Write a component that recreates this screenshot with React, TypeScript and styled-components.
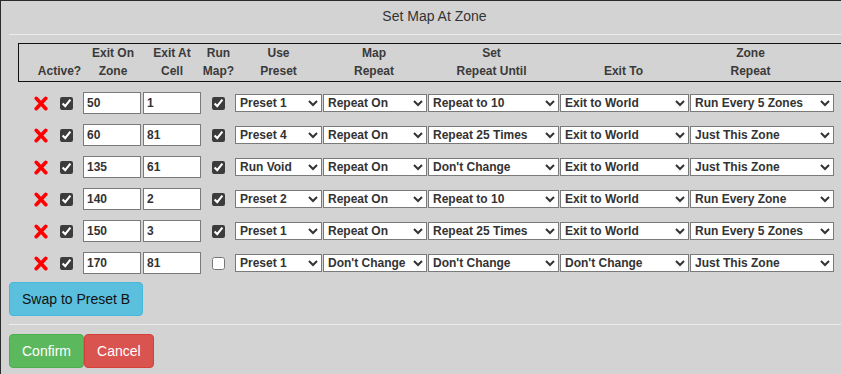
import React from "react";
import styled, { createGlobalStyle } from "styled-components";

const GlobalStyle = createGlobalStyle`
  html, body {
    margin: 0;
    padding: 0;
    background: #d3d3d3;
    overflow: hidden;
  }
  body {
    font-family: "Liberation Sans", Arial, sans-serif;
    color: #333;
  }
`;

const Modal = styled.div`
  box-sizing: border-box;
  width: 868px;
  min-height: 374px;
  background: #d3d3d3;
  border-top: 1px solid #2b2b2b;
  border-left: 1px solid #2b2b2b;
  padding: 0 0 0 8px;
`;

const Title = styled.div`
  padding-top: 5px;
  line-height: 20px;
  font-size: 14px;
  color: #333;
  text-align: center;
  margin-left: -8px;
`;

const Divider = styled.div`
  height: 1px;
  background: #ececec;
  margin: ${(p: { $top: number; $bottom: number }) => `${p.$top}px 0 ${p.$bottom}px`};
`;

const HeaderBox = styled.div`
  box-sizing: border-box;
  display: flex;
  height: 39px;
  margin-left: 9px;
  padding-left: 15px;
  border: 1px solid #111;
  border-right: none;
  font-size: 12px;
  font-weight: bold;
  line-height: 18px;
  color: #3a3a3a;
`;

const HeadCell = styled.div<{ $w: number }>`
  width: ${(p) => p.$w}px;
  flex: none;
  display: flex;
  flex-direction: column;
  justify-content: flex-end;
  align-items: center;
  padding-bottom: 1px;
  white-space: nowrap;
`;

const Rows = styled.div`
  margin-top: 5px;
`;

const Row = styled.div`
  display: flex;
  align-items: center;
  height: 32px;
  padding-left: 25px;
`;

const RemoveIcon = styled.svg`
  width: 14px;
  height: 15px;
  flex: none;
  margin-right: 12px;
`;

const Check = styled.input.attrs({ type: "checkbox" })<{ $after: number }>`
  width: 13px;
  height: 13px;
  margin: 0 ${(p) => p.$after}px 0 0;
  accent-color: #3c3c3c;
  flex: none;
`;

const NumInput = styled.input`
  box-sizing: border-box;
  width: 58px;
  height: 22px;
  margin-right: ${(p: { $after: number }) => p.$after}px;
  padding: 0 3px;
  border: 1px solid #7a7a7a;
  background: #fff;
  font-family: "Liberation Sans", Arial, sans-serif;
  font-size: 12px;
  font-weight: bold;
  color: #333;
  outline: none;
`;

const Picker = styled.select<{ $w: number }>`
  box-sizing: border-box;
  width: ${(p) => p.$w}px;
  height: 18px;
  margin-right: 1px;
  padding: 0;
  border: 1px solid #7a7a7a;
  border-radius: 0;
  background: #fff;
  font-family: "Liberation Sans", Arial, sans-serif;
  font-size: 12px;
  font-weight: bold;
  color: #333;
  flex: none;
`;

const Button = styled.button<{ $bg: string; $border: string; $fg: string }>`
  box-sizing: border-box;
  height: 34px;
  padding: 6px 12px;
  border: 1px solid ${(p) => p.$border};
  border-radius: 4px;
  background: ${(p) => p.$bg};
  color: ${(p) => p.$fg};
  font-family: "Liberation Sans", Arial, sans-serif;
  font-size: 14px;
  line-height: 20px;
  cursor: pointer;
`;

const SwapRow = styled.div`
  margin-top: 3px;
`;

const Footer = styled.div`
  display: flex;
`;

const PRESETS = ["Preset 1", "Preset 2", "Preset 3", "Preset 4", "Run Void"];
const MAP_REPEAT = ["Don't Change", "Repeat On", "Repeat Off"];
const UNTIL = ["Don't Change", "Repeat to 10", "Repeat 25 Times", "Repeat Forever"];
const EXIT_TO = ["Don't Change", "Exit to World", "Stay in Map"];
const ZONE_REPEAT = ["Just This Zone", "Run Every Zone", "Run Every 5 Zones", "Run Every 10 Zones"];

type Entry = {
  zone: string;
  cell: string;
  run: boolean;
  preset: string;
  repeat: string;
  until: string;
  exit: string;
  zoneRepeat: string;
};

const entries: Entry[] = [
  { zone: "50", cell: "1", run: true, preset: "Preset 1", repeat: "Repeat On", until: "Repeat to 10", exit: "Exit to World", zoneRepeat: "Run Every 5 Zones" },
  { zone: "60", cell: "81", run: true, preset: "Preset 4", repeat: "Repeat On", until: "Repeat 25 Times", exit: "Exit to World", zoneRepeat: "Just This Zone" },
  { zone: "135", cell: "61", run: true, preset: "Run Void", repeat: "Repeat On", until: "Don't Change", exit: "Exit to World", zoneRepeat: "Just This Zone" },
  { zone: "140", cell: "2", run: true, preset: "Preset 2", repeat: "Repeat On", until: "Repeat to 10", exit: "Exit to World", zoneRepeat: "Run Every Zone" },
  { zone: "150", cell: "3", run: true, preset: "Preset 1", repeat: "Repeat On", until: "Repeat 25 Times", exit: "Exit to World", zoneRepeat: "Run Every 5 Zones" },
  { zone: "170", cell: "81", run: false, preset: "Preset 1", repeat: "Don't Change", until: "Don't Change", exit: "Don't Change", zoneRepeat: "Just This Zone" },
];

const headers: { lines: string[]; w: number }[] = [
  { lines: ["Active?"], w: 51 },
  { lines: ["Exit On", "Zone"], w: 56 },
  { lines: ["Exit At", "Cell"], w: 62 },
  { lines: ["Run", "Map?"], w: 31 },
  { lines: ["Use", "Preset"], w: 89 },
  { lines: ["Map", "Repeat"], w: 102 },
  { lines: ["Set", "Repeat Until"], w: 133 },
  { lines: ["Exit To"], w: 131 },
  { lines: ["Zone", "Repeat"], w: 123 },
];

const Select = ({ options, value, w }: { options: string[]; value: string; w: number }) => (
  <Picker $w={w} defaultValue={value}>
    {options.map((o) => (
      <option key={o}>{o}</option>
    ))}
  </Picker>
);

const Remove = () => (
  <RemoveIcon viewBox="0 0 14 15">
    <path d="M2.2 2.3 L11.8 12.7 M11.8 2.3 L2.2 12.7" stroke="#ff0000" strokeWidth="3.6" strokeLinecap="round" fill="none" />
  </RemoveIcon>
);

export default function App() {
  return (
    <>
      <GlobalStyle />
      <Modal>
        <Title>Set Map At Zone</Title>
        <Divider $top={8} $bottom={8} />
        <HeaderBox>
          {headers.map((h) => (
            <HeadCell key={h.lines.join(" ")} $w={h.w}>
              {h.lines.map((l) => (
                <span key={l}>{l}</span>
              ))}
            </HeadCell>
          ))}
        </HeaderBox>
        <Rows>
          {entries.map((e, i) => (
            <Row key={i}>
              <Remove />
              <Check $after={10} defaultChecked />
              <NumInput $after={2} defaultValue={e.zone} />
              <NumInput $after={11} defaultValue={e.cell} />
              <Check $after={10} defaultChecked={e.run} />
              <Select options={PRESETS} value={e.preset} w={87} />
              <Select options={MAP_REPEAT} value={e.repeat} w={104} />
              <Select options={UNTIL} value={e.until} w={131} />
              <Select options={EXIT_TO} value={e.exit} w={129} />
              <Select options={ZONE_REPEAT} value={e.zoneRepeat} w={144} />
            </Row>
          ))}
        </Rows>
        <SwapRow>
          <Button $bg="#5bc0de" $border="#46b8da" $fg="#111">
            Swap to Preset B
          </Button>
        </SwapRow>
        <Divider $top={8} $bottom={9} />
        <Footer>
          <Button $bg="#5cb85c" $border="#4cae4c" $fg="#fff">
            Confirm
          </Button>
          <Button $bg="#d9534f" $border="#d43f3a" $fg="#fff">
            Cancel
          </Button>
        </Footer>
      </Modal>
    </>
  );
}
